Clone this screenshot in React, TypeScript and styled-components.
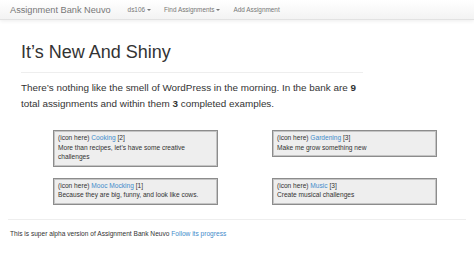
import React from 'react';
import styled, { createGlobalStyle } from 'styled-components';

interface Category {
  id: number;
  name: string;
  count: number;
  blurb: string;
}

const categories: Category[] = [
  { id: 1, name: 'Cooking', count: 2, blurb: "More than recipes, let's have some creative challenges" },
  { id: 2, name: 'Gardening', count: 3, blurb: 'Make me grow something new' },
  { id: 3, name: 'Mooc Mocking', count: 1, blurb: 'Because they are big, funny, and look like cows.' },
  { id: 4, name: 'Music', count: 3, blurb: 'Create musical challenges' },
];

const GlobalStyle = createGlobalStyle`
  html, body {
    margin: 0;
    padding: 0;
    background: #fff;
  }
  body {
    font-family: "Liberation Sans", Arial, sans-serif;
    color: #333;
  }
`;

const App: React.FC = () => {
  return (
    <Page>
      <GlobalStyle />
      <Navbar>
        <Brand>Assignment Bank Neuvo</Brand>
        <NavList>
          <NavItem>ds106<Caret /></NavItem>
          <NavItem>Find Assignments<Caret /></NavItem>
          <NavItem>Add Assignment</NavItem>
        </NavList>
      </Navbar>

      <Main>
        <Intro>
          <Title>It’s New And Shiny</Title>
          <Lead>
            There’s nothing like the smell of WordPress in the morning. In the bank are <b>9</b> total
            assignments and within them <b>3</b> completed examples.
          </Lead>
        </Intro>

        <CardGrid>
          {categories.map(cat => (
            <Card key={cat.id}>
              <div>
                (icon here) <Link>{cat.name}</Link> [{cat.count}]
              </div>
              <div>{cat.blurb}</div>
            </Card>
          ))}
        </CardGrid>
      </Main>

      <Footer>
        This is super alpha version of Assignment Bank Neuvo <Link>Follow its progress</Link>
      </Footer>
    </Page>
  );
};

const Page = styled.div`
  width: 474px;
  min-height: 261px;
  overflow: hidden;
`;

const Navbar = styled.div`
  height: 19px;
  display: flex;
  align-items: center;
  padding-left: 10px;
  background: linear-gradient(#ffffff, #f3f3f3);
  border-bottom: 1px solid #e2e2e2;
  box-shadow: 0 1px 4px rgba(0, 0, 0, 0.08);
`;

const Brand = styled.div`
  font-size: 9.2px;
  color: #777;
  margin-right: 17px;
`;

const NavList = styled.div`
  display: flex;
  gap: 13px;
`;

const NavItem = styled.div`
  font-size: 6.4px;
  color: #777;
  display: flex;
  align-items: center;
`;

const Caret = styled.span`
  display: inline-block;
  width: 0;
  height: 0;
  margin-left: 2px;
  border-left: 2px solid transparent;
  border-right: 2px solid transparent;
  border-top: 2px solid #777;
`;

const Main = styled.div`
  padding: 0 0 0 21px;
`;

const Intro = styled.div`
  width: 342px;
`;

const Title = styled.h1`
  margin: 21px 0 0;
  padding-bottom: 9px;
  font-size: 18px;
  font-weight: 400;
  line-height: 22px;
  color: #333;
  border-bottom: 1px solid #eee;
`;

const Lead = styled.p`
  margin: 7px 0 0;
  font-size: 9.9px;
  line-height: 16px;
  color: #333;

  b {
    font-weight: 700;
  }
`;

const CardGrid = styled.div`
  display: grid;
  grid-template-columns: 165px 165px;
  column-gap: 54px;
  row-gap: 11px;
  align-items: start;
  margin-top: 18px;
  padding-left: 32px;
`;

const Card = styled.div`
  background: #eeeeee;
  border: 1px solid #8c8c8c;
  box-shadow: inset 0 0 0 1px #c4c4c4;
  padding: 2px 4px 4px;
  font-size: 6.6px;
  line-height: 9.5px;
  color: #333;
`;

const Link = styled.span`
  color: #428bca;
`;

const Footer = styled.div`
  margin: 14px 8px 0;
  border-top: 1px solid #eee;
  padding: 10px 2px;
  font-size: 6.6px;
  color: #333;
`;

export default App;
